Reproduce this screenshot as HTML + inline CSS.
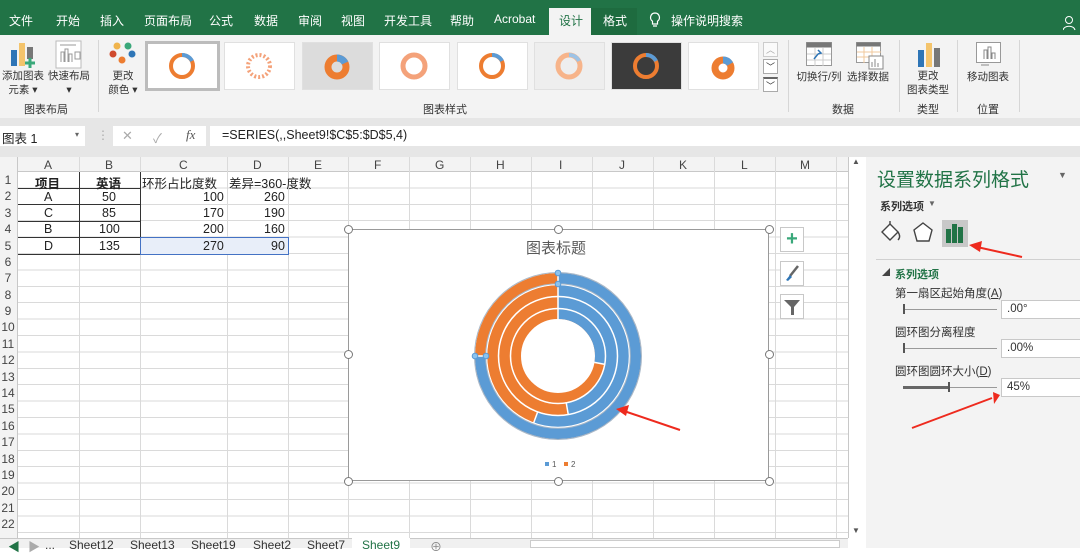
<!DOCTYPE html>
<html><head><meta charset="utf-8">
<style>
*{margin:0;padding:0;box-sizing:border-box}
body{width:1080px;height:548px;overflow:hidden;background:#fff;font-family:"Liberation Sans","Noto Sans CJK SC",sans-serif;font-size:12px;color:#222;position:relative}
.a{position:absolute;white-space:nowrap}
.tab{position:absolute;top:12px;color:#fff;font-size:12px}
.lbl{position:absolute;font-size:11px;color:#333;text-align:center;white-space:nowrap}
.sep{position:absolute;width:1px;background:#d6d6d6}
.th{position:absolute;width:71px;height:48px;top:42px;background:#fff;border:1px solid #e0e0e0}
.vl{position:absolute;top:157px;height:381px;width:1px;background:#dadada}
.ch{position:absolute;top:158px;font-size:12px;color:#444;text-align:center}
.rh{position:absolute;left:0;width:16px;font-size:12px;color:#444;text-align:center}
.cell{position:absolute;font-size:12.5px;color:#222}
.h{position:absolute;width:9px;height:9px;border:1px solid #777;border-radius:50%;background:#fff}
.pl{position:absolute;font-size:11.5px;color:#333}
.inp{position:absolute;left:1001px;width:82px;height:19px;border:1px solid #c8c8c8;background:#fff;font-size:11.5px;padding:2px 5px;color:#333}
.sl{position:absolute;left:903px;width:94px;height:1px;background:#9a9a9a}
.sht{position:absolute;top:538px;font-size:12px;color:#333}
</style></head><body>
<div class="a" style="left:0;top:0;width:1080px;height:35px;background:#217346"></div>
<div class="a" style="left:549px;top:8px;width:42px;height:27px;background:#f3f3f3"></div>
<div class="a" style="left:591px;top:8px;width:46px;height:27px;background:#1e6b3f"></div>
<span class="tab" style="left:9px">文件</span><span class="tab" style="left:56px">开始</span><span class="tab" style="left:100px">插入</span><span class="tab" style="left:144px">页面布局</span><span class="tab" style="left:209px">公式</span><span class="tab" style="left:254px">数据</span><span class="tab" style="left:298px">审阅</span><span class="tab" style="left:341px">视图</span><span class="tab" style="left:384px">开发工具</span><span class="tab" style="left:450px">帮助</span><span class="tab" style="left:494px">Acrobat</span>
<span class="tab" style="left:559px;color:#217346">设计</span><span class="tab" style="left:603px">格式</span>
<svg class="a" style="left:649px;top:12px" width="12" height="16" viewBox="0 0 12 16"><path d="M6 1a4.5 4.5 0 0 0-2.5 8.2V12h5V9.2A4.5 4.5 0 0 0 6 1zM4 14h4" fill="none" stroke="#fff" stroke-width="1.2"/></svg>
<span class="tab" style="left:671px">操作说明搜索</span>
<svg class="a" style="left:1063px;top:15px" width="14" height="16"><circle cx="6" cy="5" r="3.5" fill="none" stroke="#fff"/><path d="M0 15c1-5 11-5 12 0" fill="none" stroke="#fff"/></svg>
<div class="a" style="left:0;top:35px;width:1080px;height:83px;background:#f3f3f3"></div>
<div class="a" style="left:0;top:118px;width:1080px;height:7px;background:#e6e6e6"></div>
<svg class="a" style="left:10px;top:41px" width="28" height="28"><rect x="1" y="9" width="6" height="16" fill="#2e75b6"/><rect x="9" y="2" width="6" height="23" fill="#f4c46c"/><rect x="17" y="6" width="6" height="12" fill="#777"/><path d="M20 17v10M15 22h10" stroke="#3aa87a" stroke-width="3"/></svg>
<svg class="a" style="left:55px;top:40px" width="28" height="30"><rect x="1" y="1" width="25" height="27" fill="#fff" stroke="#bbb"/><path d="M5 5h16M6 22V12h3v10M10 22V9h3v13M14 22V14h3v8" fill="none" stroke="#999"/><rect x="20" y="12" width="5" height="7" fill="none" stroke="#999"/></svg>
<div class="lbl" style="left:0px;top:69px;width:46px;line-height:14px;font-size:10.5px">添加图表<br>元素 ▾</div>
<div class="lbl" style="left:47px;top:69px;width:44px;line-height:14px;font-size:10.5px">快速布局<br>▾</div>
<div class="lbl" style="left:24px;top:101px;width:44px">图表布局</div>
<div class="sep" style="left:98px;top:40px;height:72px"></div>
<svg class="a" style="left:109px;top:40px" width="28" height="28"><circle cx="8" cy="6" r="3.5" fill="#f0b44c"/><circle cx="19" cy="6" r="3.5" fill="#3aa87a"/><circle cx="4" cy="14" r="3.5" fill="#d04a2e"/><circle cx="23" cy="14" r="3.5" fill="#2e75b6"/><circle cx="13" cy="20" r="3.5" fill="#ed7d31"/></svg>
<div class="lbl" style="left:103px;top:69px;width:40px;line-height:14px;font-size:10.5px">更改<br>颜色 ▾</div>
<div class="th" style="left:145px;border:3px solid #bcbcbc;width:75px;height:50px;top:41px"></div>
<div class="th" style="left:224px"></div>
<div class="th" style="left:302px;background:#dcdcdc"></div>
<div class="th" style="left:379px"></div>
<div class="th" style="left:457px"></div>
<div class="th" style="left:534px;background:#eeeeee"></div>
<div class="th" style="left:611px;background:#3b3b3b"></div>
<div class="th" style="left:688px"></div>
<svg class="a" style="left:145px;top:41px" width="620" height="50">
<g fill="none" stroke-width="4"><circle cx="37" cy="25" r="11" stroke="#ed7d31"/><circle cx="114" cy="25" r="11" stroke="#f4a27a" stroke-dasharray="2 2"/><circle cx="192" cy="26" r="9" stroke="#ed7d31" stroke-width="7"/><circle cx="269" cy="25" r="11" stroke="#f4a27a" stroke-width="5"/><circle cx="347" cy="25" r="11" stroke="#ed7d31"/><circle cx="424" cy="25" r="11" stroke="#f7b48a" stroke-width="5"/><circle cx="501" cy="25" r="11" stroke="#ed7d31"/><circle cx="578" cy="27" r="8" stroke="#ed7d31" stroke-width="7"/></g>
<g fill="none" stroke="#5b9bd5" stroke-width="4"><path d="M37 14a11 11 0 0 1 10 6"/><path d="M347 14a11 11 0 0 1 10 6"/><path d="M501 14a11 11 0 0 1 10 6"/><path d="M424 14a11 11 0 0 1 10 6" stroke="#9dc3e6"/><path d="M578 19a8 8 0 0 1 7 4" stroke-width="7"/><path d="M192 17a9 9 0 0 1 8 5" stroke-width="7"/></g></svg>
<div class="a" style="left:763px;top:42px;width:15px;height:15px;border:1px solid #ccc;background:#fafafa;font-size:9px;text-align:center;color:#aaa">︿</div>
<div class="a" style="left:763px;top:59px;width:15px;height:15px;border:1px solid #aaa;background:#fff;font-size:9px;text-align:center;color:#333">﹀</div>
<div class="a" style="left:763px;top:77px;width:15px;height:15px;border:1px solid #aaa;background:#fff;font-size:9px;text-align:center;color:#333;border-top:2px solid #666">﹀</div>
<div class="lbl" style="left:420px;top:101px;width:50px">图表样式</div>
<div class="sep" style="left:788px;top:40px;height:72px"></div>
<svg class="a" style="left:806px;top:42px" width="26" height="24"><rect x="0.5" y="0.5" width="25" height="23" fill="#fff" stroke="#999"/><rect x="0.5" y="0.5" width="25" height="5" fill="#777"/><path d="M9 6v18M17 6v18M1 12h24M1 18h24" stroke="#ccc"/><path d="M8 17l4-5M12 8l3 3-3 1" stroke="#2e75b6" fill="none" stroke-width="1.5"/></svg>
<svg class="a" style="left:856px;top:42px" width="28" height="28"><rect x="0.5" y="0.5" width="24" height="20" fill="#fff" stroke="#999"/><rect x="0.5" y="0.5" width="24" height="4" fill="#777"/><path d="M8 5v16M16 5v16M1 10h24M1 15h24" stroke="#f0c89c"/><rect x="13" y="14" width="14" height="13" fill="#fff" stroke="#888"/><path d="M16 25v-5M19 25v-8M22 25v-4" stroke="#888"/></svg>
<div class="lbl" style="left:795px;top:69px;width:48px;font-size:10.5px">切换行/列</div>
<div class="lbl" style="left:845px;top:69px;width:46px;font-size:10.5px">选择数据</div>
<div class="lbl" style="left:831px;top:101px;width:24px">数据</div>
<div class="sep" style="left:899px;top:40px;height:72px"></div>
<svg class="a" style="left:917px;top:42px" width="24" height="26"><rect x="1" y="8" width="6" height="17" fill="#2e75b6"/><rect x="9" y="1" width="6" height="24" fill="#f4c46c"/><rect x="17" y="6" width="6" height="19" fill="#777"/></svg>
<div class="lbl" style="left:905px;top:69px;width:46px;line-height:14px;font-size:10.5px">更改<br>图表类型</div>
<div class="lbl" style="left:916px;top:101px;width:24px">类型</div>
<div class="sep" style="left:957px;top:40px;height:72px"></div>
<svg class="a" style="left:976px;top:42px" width="26" height="24"><rect x="0.5" y="0.5" width="24" height="20" fill="#fff" stroke="#999"/><path d="M8 17V8h3v9M12 17V5h3v12M16 17v-6h3v6" fill="none" stroke="#888"/><path d="M5 23h8" stroke="#888"/></svg>
<div class="lbl" style="left:965px;top:69px;width:46px;font-size:10.5px">移动图表</div>
<div class="lbl" style="left:976px;top:101px;width:24px">位置</div>
<div class="sep" style="left:1019px;top:40px;height:72px"></div>
<div class="a" style="left:0;top:125px;width:1080px;height:32px;background:#e6e6e6"></div>
<div class="a" style="left:0;top:126px;width:85px;height:20px;background:#fff"></div>
<span class="a" style="left:2px;top:128px;font-size:12.5px">图表 1</span><span class="a" style="left:75px;top:130px;font-size:8px;color:#666">▾</span>
<span class="a" style="left:97px;top:128px;color:#aaa">⋮</span>
<div class="a" style="left:113px;top:126px;width:93px;height:20px;background:#fff"></div>
<span class="a" style="left:122px;top:128px;color:#aaa;font-size:13px">✕</span><span class="a" style="left:153px;top:128px;color:#aaa;font-size:13px">✓</span><span class="a" style="left:186px;top:127px;color:#555;font-size:13px;font-style:italic;font-family:'Liberation Serif',serif">fx</span>
<div class="a" style="left:210px;top:126px;width:870px;height:20px;background:#fff"></div>
<span class="a" style="left:222px;top:128px;font-size:12.5px">=SERIES(,,Sheet9!$C$5:$D$5,4)</span>
<div class="a" style="left:0;top:157px;width:848px;height:15px;background:#f3f3f3;border-bottom:1px solid #c8c8c8"></div>
<div class="a" style="left:0;top:157px;width:18px;height:381px;background:#f3f3f3;border-right:1px solid #c8c8c8"></div>
<div class="a" style="left:18px;top:172px;width:830px;height:366px;background:repeating-linear-gradient(to bottom,transparent 0,transparent 15.4px,#dadada 15.4px,#dadada 16.4px)"></div>
<div class="vl" style="left:79px"></div><div class="vl" style="left:140px"></div><div class="vl" style="left:227px"></div><div class="vl" style="left:288px"></div><div class="vl" style="left:348px"></div><div class="vl" style="left:409px"></div><div class="vl" style="left:470px"></div><div class="vl" style="left:531px"></div><div class="vl" style="left:592px"></div><div class="vl" style="left:653px"></div><div class="vl" style="left:714px"></div><div class="vl" style="left:775px"></div><div class="vl" style="left:836px"></div>
<span class="ch" style="left:44px">A</span><span class="ch" style="left:105px">B</span><span class="ch" style="left:179px">C</span><span class="ch" style="left:253px">D</span><span class="ch" style="left:314px">E</span><span class="ch" style="left:374px">F</span><span class="ch" style="left:435px">G</span><span class="ch" style="left:496px">H</span><span class="ch" style="left:559px">I</span><span class="ch" style="left:619px">J</span><span class="ch" style="left:679px">K</span><span class="ch" style="left:741px">L</span><span class="ch" style="left:800px">M</span>
<span class="rh" style="top:173px">1</span><span class="rh" style="top:189px">2</span><span class="rh" style="top:206px">3</span><span class="rh" style="top:222px">4</span><span class="rh" style="top:239px">5</span><span class="rh" style="top:255px">6</span><span class="rh" style="top:271px">7</span><span class="rh" style="top:288px">8</span><span class="rh" style="top:304px">9</span><span class="rh" style="top:320px">10</span><span class="rh" style="top:337px">11</span><span class="rh" style="top:353px">12</span><span class="rh" style="top:370px">13</span><span class="rh" style="top:386px">14</span><span class="rh" style="top:402px">15</span><span class="rh" style="top:419px">16</span><span class="rh" style="top:435px">17</span><span class="rh" style="top:452px">18</span><span class="rh" style="top:468px">19</span><span class="rh" style="top:484px">20</span><span class="rh" style="top:501px">21</span><span class="rh" style="top:517px">22</span>
<div class="a" style="left:18px;top:172px;width:123px;height:83px;border:1px solid #333;border-top:none;border-left:none"></div>
<div class="a" style="left:79px;top:172px;width:1px;height:83px;background:#333"></div>
<div class="a" style="left:18px;top:188px;width:122px;height:1px;background:#333"></div><div class="a" style="left:18px;top:204px;width:122px;height:1px;background:#333"></div><div class="a" style="left:18px;top:221px;width:122px;height:1px;background:#333"></div><div class="a" style="left:18px;top:237px;width:122px;height:1px;background:#333"></div>
<div class="a" style="left:140px;top:237px;width:149px;height:18px;background:#e8eef9;border:1.5px solid #4472c4"></div>
<span class="cell" style="left:35px;top:173px;font-weight:bold">项目</span><span class="cell" style="left:96px;top:173px;font-weight:bold">英语</span><span class="cell" style="left:142px;top:173px">环形占比度数</span><span class="cell" style="left:229px;top:173px">差异=360-度数</span>
<span class="cell" style="left:44px;top:190px">A</span><span class="cell" style="left:102px;top:190px">50</span><span class="cell" style="left:203px;top:190px">100</span><span class="cell" style="left:264px;top:190px">260</span>
<span class="cell" style="left:44px;top:206px">C</span><span class="cell" style="left:102px;top:206px">85</span><span class="cell" style="left:203px;top:206px">170</span><span class="cell" style="left:264px;top:206px">190</span>
<span class="cell" style="left:44px;top:222px">B</span><span class="cell" style="left:99px;top:222px">100</span><span class="cell" style="left:203px;top:222px">200</span><span class="cell" style="left:264px;top:222px">160</span>
<span class="cell" style="left:44px;top:239px">D</span><span class="cell" style="left:99px;top:239px">135</span><span class="cell" style="left:203px;top:239px">270</span><span class="cell" style="left:271px;top:239px">90</span>
<div class="a" style="left:348px;top:229px;width:421px;height:252px;background:#fff;border:1px solid #9a9a9a"></div>
<span class="a" style="left:526px;top:237px;font-size:15px;color:#595959">图表标题</span>
<svg class="a" style="left:0;top:0" width="1080" height="548">
<g transform="rotate(-90 558 356)" fill="none">
<circle cx="558" cy="356" r="77.5" stroke="#ed7d31" stroke-width="11"/><circle cx="558" cy="356" r="77.5" stroke="#5b9bd5" stroke-width="11" stroke-dasharray="365.2 1000"/>
<circle cx="558" cy="356" r="65.5" stroke="#ed7d31" stroke-width="11"/><circle cx="558" cy="356" r="65.5" stroke="#5b9bd5" stroke-width="11" stroke-dasharray="228.6 1000"/>
<circle cx="558" cy="356" r="53.5" stroke="#ed7d31" stroke-width="11"/><circle cx="558" cy="356" r="53.5" stroke="#5b9bd5" stroke-width="11" stroke-dasharray="158.7 1000"/>
<circle cx="558" cy="356" r="42" stroke="#ed7d31" stroke-width="10"/><circle cx="558" cy="356" r="42" stroke="#5b9bd5" stroke-width="10" stroke-dasharray="73.3 1000"/>
</g>
<g fill="none" stroke="#fff" stroke-width="1.5"><circle cx="558" cy="356" r="59.5"/><circle cx="558" cy="356" r="47.5"/><circle cx="558" cy="356" r="71.5"/>
<path d="M558 273V319M475 356H486M537.5 412.4L533.7 422.7M566.3 403.3L568.2 414.1M594.4 362.4L604.3 364.2"/></g>
<g fill="none" stroke="#a9b8c8" stroke-width="1"><circle cx="558" cy="356" r="83.5"/><circle cx="558" cy="356" r="72.3"/></g>
<g fill="#8cc3ee" stroke="#5b9bd5"><circle cx="558" cy="273" r="2.8"/><circle cx="558" cy="284" r="2.8"/><circle cx="475" cy="356" r="2.8"/><circle cx="486" cy="356" r="2.8"/></g>
<rect x="545" y="462" width="4" height="4" fill="#5b9bd5"/><text x="552" y="467" font-size="8" fill="#595959" font-family="Liberation Sans">1</text>
<rect x="564" y="462" width="4" height="4" fill="#ed7d31"/><text x="571" y="467" font-size="8" fill="#595959" font-family="Liberation Sans">2</text>
</svg>
<div class="h" style="left:344px;top:225px"></div><div class="h" style="left:554px;top:225px"></div><div class="h" style="left:765px;top:225px"></div><div class="h" style="left:344px;top:350px"></div><div class="h" style="left:765px;top:350px"></div><div class="h" style="left:344px;top:477px"></div><div class="h" style="left:554px;top:477px"></div><div class="h" style="left:765px;top:477px"></div>
<div class="a" style="left:780px;top:227px;width:24px;height:25px;background:#fff;border:1px solid #c8c8c8;color:#3aa87a;font-size:20px;line-height:22px;text-align:center;font-weight:bold">+</div>
<div class="a" style="left:780px;top:261px;width:24px;height:25px;background:#fff;border:1px solid #c8c8c8"><svg width="22" height="23"><path d="M17 4L9 14" stroke="#666" stroke-width="2.5"/><path d="M9 13l-4 5 2 1 4-4z" fill="#2e75b6"/></svg></div>
<div class="a" style="left:780px;top:294px;width:24px;height:25px;background:#fff;border:1px solid #c8c8c8"><svg width="22" height="23"><path d="M3 5h16l-6 7v8h-3v-8z" fill="#666"/></svg></div>
<div class="a" style="left:848px;top:157px;width:18px;height:381px;background:#fff;border-left:1px solid #c8c8c8"></div>
<span class="a" style="left:852px;top:157px;font-size:8px;color:#555">▲</span><span class="a" style="left:852px;top:526px;font-size:8px;color:#555">▼</span>
<div class="a" style="left:866px;top:157px;width:214px;height:391px;background:#f3f3f3"></div>
<span class="a" style="left:877px;top:165px;font-size:19px;color:#217346">设置数据系列格式</span>
<span class="a" style="left:1058px;top:170px;font-size:9px;color:#666">▼</span>
<span class="a" style="left:880px;top:198px;font-size:11px;font-weight:bold;color:#333">系列选项</span><span class="a" style="left:928px;top:199px;font-size:8px;color:#666">▼</span>
<svg class="a" style="left:878px;top:220px" width="26" height="26"><path d="M4 12l8-8 8 8-8 8z" fill="#fff" stroke="#444" stroke-width="1.4"/><path d="M12 4V1M20 12c2 3 2 6 0 8" stroke="#444" fill="none" stroke-width="1.4"/></svg>
<svg class="a" style="left:911px;top:220px" width="24" height="26"><path d="M12 3L21 10L18 21H6L3 10Z" fill="#fff" stroke="#444" stroke-width="1.4"/></svg>
<div class="a" style="left:942px;top:220px;width:26px;height:27px;background:#c8c8c8"></div>
<svg class="a" style="left:945px;top:222px" width="20" height="22"><rect x="1" y="7" width="5" height="14" fill="#217346"/><rect x="7" y="2" width="5" height="19" fill="#217346"/><rect x="13" y="5" width="5" height="16" fill="#217346"/></svg>
<div class="a" style="left:876px;top:259px;width:204px;height:1px;background:#d0d0d0"></div>
<span class="a" style="left:882px;top:267px;font-size:8px;color:#444">◢</span>
<span class="a" style="left:895px;top:266px;font-size:11px;font-weight:bold;color:#217346">系列选项</span>
<span class="pl" style="left:895px;top:285px">第一扇区起始角度(<u>A</u>)</span>
<div class="sl" style="top:309px"></div><div class="a" style="left:903px;top:304px;width:2px;height:10px;background:#555"></div>
<div class="inp" style="top:300px">.00°</div>
<span class="pl" style="left:895px;top:324px">圆环图分离程度</span>
<div class="sl" style="top:348px"></div><div class="a" style="left:903px;top:343px;width:2px;height:10px;background:#555"></div>
<div class="inp" style="top:339px">.00%</div>
<span class="pl" style="left:895px;top:363px">圆环图圆环大小(<u>D</u>)</span>
<div class="sl" style="top:387px"></div><div class="a" style="left:903px;top:386px;width:46px;height:3px;background:#666"></div><div class="a" style="left:948px;top:382px;width:2px;height:10px;background:#555"></div>
<div class="inp" style="top:378px">45%</div>
<div class="a" style="left:0;top:538px;width:848px;height:10px;background:#f0f0f0;border-top:1px solid #c8c8c8"></div>
<div class="a" style="left:352px;top:538px;width:58px;height:10px;background:#fff"></div>
<span class="sht" style="left:8px;color:#217346">◀</span><span class="sht" style="left:28px;color:#aaa">▶</span><span class="sht" style="left:45px">...</span>
<span class="sht" style="left:69px">Sheet12</span><span class="sht" style="left:130px">Sheet13</span><span class="sht" style="left:191px">Sheet19</span><span class="sht" style="left:253px">Sheet2</span><span class="sht" style="left:307px">Sheet7</span><span class="sht" style="left:362px;color:#217346">Sheet9</span>
<span class="sht" style="left:430px;color:#888">⊕</span>
<div class="a" style="left:530px;top:540px;width:310px;height:8px;background:#fff;border:1px solid #ccc"></div>
<svg class="a" style="left:0;top:0" width="1080" height="548">
<g fill="none" stroke="#ee2a1e" stroke-width="2"><path d="M680 430L624 411"/><path d="M1022 257L977 247"/><path d="M912 428L992 398"/></g>
<g fill="#ee2a1e"><path d="M616 409L629 405L626 416Z"/><path d="M969 245L982 241L980 252Z"/><path d="M1000 395L993 392L994 404Z"/></g>
</svg>
</body></html>
